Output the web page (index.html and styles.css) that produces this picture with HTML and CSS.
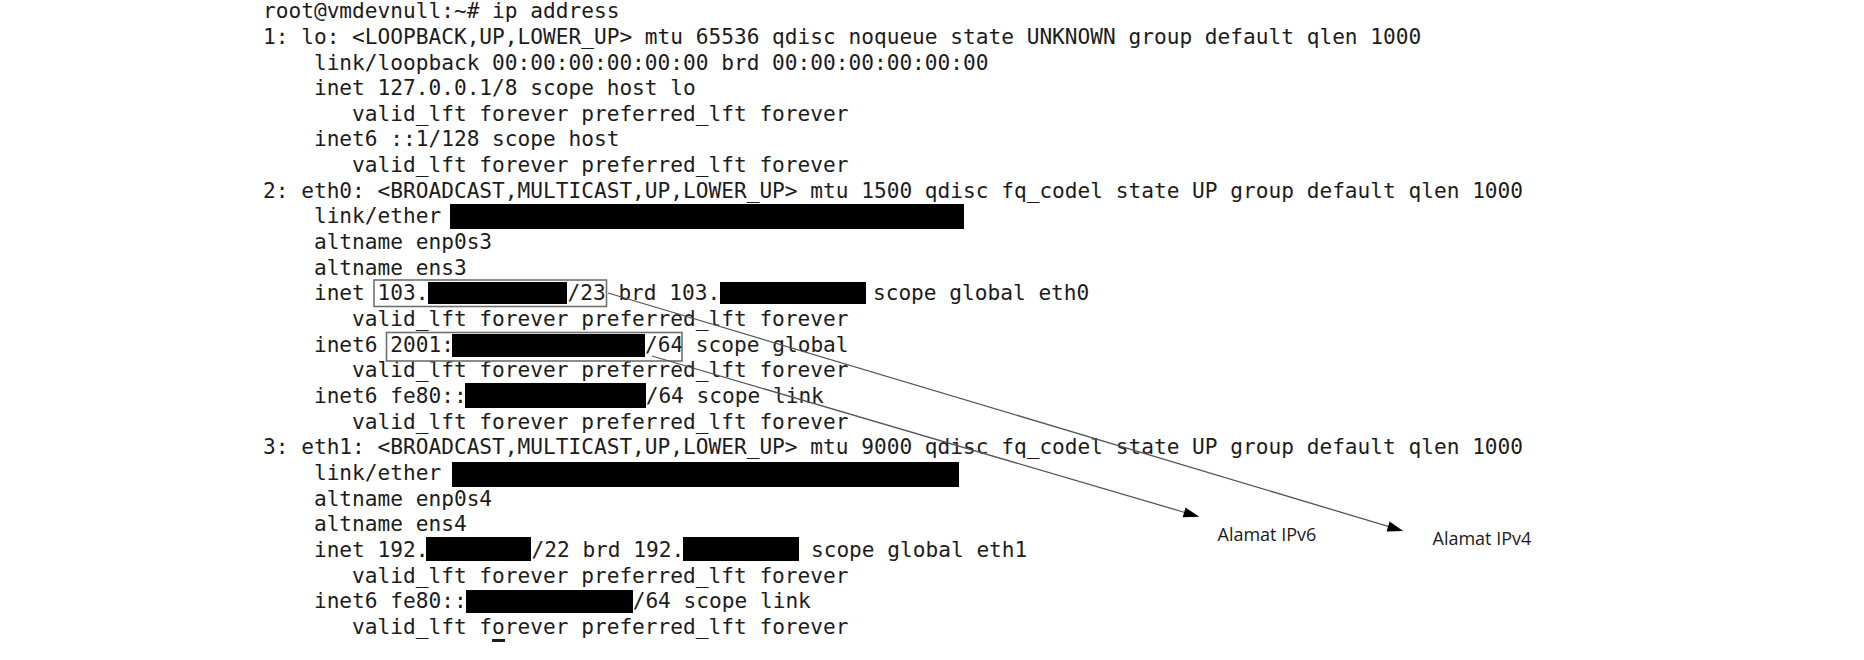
FILE: index.html
```html
<!DOCTYPE html>
<html lang="id">
<head>
<meta charset="utf-8">
<title>ip address</title>
<link rel="stylesheet" href="styles.css">
</head>
<body>
<div class="page">
<pre class="term">root@vmdevnull:~# ip address
1: lo: &lt;LOOPBACK,UP,LOWER_UP&gt; mtu 65536 qdisc noqueue state UNKNOWN group default qlen 1000
    link/loopback 00:00:00:00:00:00 brd 00:00:00:00:00:00
    inet 127.0.0.1/8 scope host lo
       valid_lft forever preferred_lft forever
    inet6 ::1/128 scope host
       valid_lft forever preferred_lft forever
2: eth0: &lt;BROADCAST,MULTICAST,UP,LOWER_UP&gt; mtu 1500 qdisc fq_codel state UP group default qlen 1000
    link/ether <span class="rd rd-mac0"></span>
    altname enp0s3
    altname ens3
    inet 103.<span class="rd rd-in rd-v4a"></span>/23 brd 103.<span class="rd rd-in rd-v4b"></span> scope global eth0
       valid_lft forever preferred_lft forever
    inet6 2001:<span class="rd rd-v6g"></span>/64 scope global
       valid_lft forever preferred_lft forever
    inet6 fe80::<span class="rd rd-v6l0"></span>/64 scope link
       valid_lft forever preferred_lft forever
3: eth1: &lt;BROADCAST,MULTICAST,UP,LOWER_UP&gt; mtu 9000 qdisc fq_codel state UP group default qlen 1000
    link/ether <span class="rd rd-mac1"></span>
    altname enp0s4
    altname ens4
    inet 192.<span class="rd rd-v4c"></span>/22 brd 192.<span class="rd rd-v4d"></span> scope global eth1
       valid_lft forever preferred_lft forever
    inet6 fe80::<span class="rd rd-v6l1"></span>/64 scope link
       valid_lft f<span class="cursor">o</span>rever preferred_lft forever</pre>

<svg class="annot" width="1864" height="660" viewBox="0 0 1864 660" xmlns="http://www.w3.org/2000/svg">
  <rect x="374" y="280" width="232.5" height="26.5" fill="none" stroke="#707070" stroke-width="1.6"/>
  <rect x="386.5" y="332.5" width="295.5" height="28.5" fill="none" stroke="#707070" stroke-width="1.6"/>
  <line x1="608" y1="293" x2="1389" y2="526.6" stroke="#555" stroke-width="1.3"/>
  <polygon points="1403.3,531 1386.6,531.4 1389.6,521.6" fill="#000"/>
  <line x1="652" y1="356" x2="1185" y2="512.5" stroke="#555" stroke-width="1.3"/>
  <polygon points="1199.3,516.8 1182.6,517.2 1185.6,507.6" fill="#000"/>
</svg>
<span class="label label-v6">Alamat IPv6</span>
<span class="label label-v4">Alamat IPv4</span>
</div>
</body>
</html>
```

FILE: styles.css
```css
html, body {
  margin: 0;
  padding: 0;
  background: #fff;
}

.page {
  position: relative;
  width: 1864px;
  height: 660px;
  overflow: hidden;
  background: #fff;
}

.term {
  margin: -1.8px 0 0 0;
  padding: 0 0 0 263px;
  font-family: "DejaVu Sans Mono", monospace;
  font-size: 21.15px;
  line-height: 25.65px;
  color: #1c1c1c;
  white-space: pre;
}

.rd {
  display: inline-block;
  vertical-align: top;
  background: #000;
  height: 25px;
  margin-top: 0.3px;
}

.rd-in {
  height: 22px;
  margin-top: 2px;
}

.rd-mac0 { width: 514px; margin-left: -4px; }
.rd-v4a  { width: 139px; }
.rd-v4b  { width: 146px; margin-right: -6px; }
.rd-v6g  { width: 193px; margin-left: -2px; height: 23.2px; margin-top: 2.4px; }
.rd-v6l0 { width: 181px; margin-left: -2px; }
.rd-mac1 { width: 507px; margin-left: -2px; margin-top: 2px; margin-bottom: -2px; }
.rd-v4c  { width: 105px; margin-left: -2px; height: 24px; }
.rd-v4d  { width: 116px; margin-left: -1px; margin-right: -1px; height: 24px; }
.rd-v6l1 { width: 167px; margin-left: -1px; height: 23px; margin-top: 2px; }

.cursor {
  border-bottom: 3px solid #1c1c1c;
}

.annot {
  position: absolute;
  left: 0;
  top: 0;
  pointer-events: none;
}

.label {
  position: absolute;
  font-family: "Open Sans", "Noto Sans", sans-serif;
  font-size: 18px;
  line-height: 18px;
  color: #1a1a1a;
  white-space: nowrap;
}

.label-v6 { left: 1217.5px; top: 524.7px; }
.label-v4 { left: 1432.5px; top: 529px; }
```
